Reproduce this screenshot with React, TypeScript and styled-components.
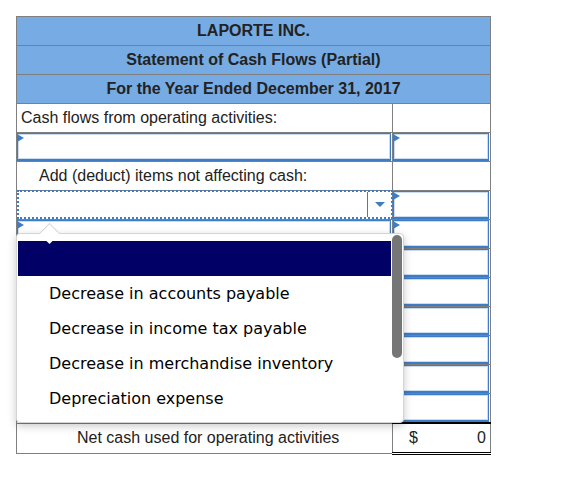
import React from 'react';
import styled, { createGlobalStyle } from 'styled-components';

const GlobalStyle = createGlobalStyle`
  body {
    margin: 0;
    background: #fff;
    font-family: "Liberation Sans", Arial, sans-serif;
  }
`;

const Page = styled.div`
  padding: 16px 0 0 16px;
`;

const Sheet = styled.table`
  border-collapse: collapse;
  table-layout: fixed;
  font-size: 16px;
  color: #222;
`;

const HeadCell = styled.td`
  height: 28px;
  padding: 0;
  border: 1px solid #7f7f7f;
  background: #76abe3;
  font-weight: bold;
  text-align: center;
`;

const Cell = styled.td<{ $indent?: number }>`
  position: relative;
  height: 28px;
  padding: 0 0 0 ${(p) => p.$indent ?? 4}px;
  border: 1px solid #7f7f7f;
  background: #fff;
  white-space: nowrap;
`;

const FieldCell = styled.td`
  position: relative;
  height: 28px;
  padding: 0;
  border: 1px solid #7f7f7f;
  background: #fff;
`;

const Field = styled.div`
  position: relative;
  height: 28px;
  box-sizing: border-box;
  margin-right: 1px;
  border: 1px solid #3f7cc6;
  border-bottom-width: 2px;
  box-shadow: inset 0 0 0 1px #c9dcf2;
  background: #fff;

  &::before {
    content: '';
    position: absolute;
    left: -1px;
    top: 0;
    border-left: 7px solid #3f7cc6;
    border-top: 4px solid transparent;
    border-bottom: 4px solid transparent;
  }
`;

const Select = styled.div`
  height: 29px;
  box-sizing: border-box;
  margin: -1px -1px 0 0;
  border: 2px dotted #3f7cc6;
  display: flex;
  justify-content: flex-end;
`;

const SelectArrow = styled.div`
  width: 23px;
  border-left: 1px solid #3f7cc6;
  display: flex;
  align-items: center;
  justify-content: center;

  &::after {
    content: '';
    border-top: 5px solid #3f7cc6;
    border-left: 5px solid transparent;
    border-right: 5px solid transparent;
  }
`;

const Menu = styled.div`
  position: absolute;
  z-index: 5;
  left: -1px;
  top: 42px;
  width: 388px;
  height: 190px;
  box-sizing: border-box;
  background: #fff;
  border: 1px solid #d4d4d4;
  border-radius: 4px;
  box-shadow: 0 3px 8px rgba(0, 0, 0, 0.22);

  &::before {
    content: '';
    position: absolute;
    left: 25px;
    top: -8px;
    width: 14px;
    height: 14px;
    background: #fff;
    border-left: 1px solid #d4d4d4;
    border-top: 1px solid #d4d4d4;
    transform: rotate(45deg);
  }
`;

const MenuList = styled.ul`
  list-style: none;
  margin: 0;
  padding: 7px 12px 0 1px;
  height: 100%;
  box-sizing: border-box;
  overflow: hidden;
  font-family: "DejaVu Sans", Verdana, sans-serif;
  font-size: 16px;
  color: #000;
`;

const ScrollThumb = styled.div`
  position: absolute;
  top: 1px;
  right: 1px;
  width: 10px;
  height: 123px;
  border-radius: 5px;
  background: #767676;
`;

const Option = styled.li<{ $active?: boolean }>`
  height: 35px;
  line-height: 35px;
  padding-left: 31px;
  white-space: nowrap;
  background: ${(p) => (p.$active ? '#000066' : 'transparent')};
`;

const TotalCell = styled.td`
  height: 28px;
  padding: 0 4px 0 16px;
  border: 1px solid #7f7f7f;
  border-top: 2px solid #000;
  border-bottom: 3px double #000;
`;

const Amount = styled.div`
  display: flex;
  justify-content: space-between;
`;

const options = [
  '',
  'Decrease in accounts payable',
  'Decrease in income tax payable',
  'Decrease in merchandise inventory',
  'Depreciation expense',
];

function InputRow() {
  return (
    <tr>
      <FieldCell>
        <Field />
      </FieldCell>
      <FieldCell>
        <Field />
      </FieldCell>
    </tr>
  );
}

export default function App() {
  return (
    <>
      <GlobalStyle />
      <Page>
        <Sheet>
          <colgroup>
            <col style={{ width: 376 }} />
            <col style={{ width: 98 }} />
          </colgroup>
          <tbody>
            <tr>
              <HeadCell colSpan={2}>LAPORTE INC.</HeadCell>
            </tr>
            <tr>
              <HeadCell colSpan={2}>Statement of Cash Flows (Partial)</HeadCell>
            </tr>
            <tr>
              <HeadCell colSpan={2}>For the Year Ended December 31, 2017</HeadCell>
            </tr>
            <tr>
              <Cell>Cash flows from operating activities:</Cell>
              <Cell />
            </tr>
            <InputRow />
            <tr>
              <Cell $indent={22}>Add (deduct) items not affecting cash:</Cell>
              <Cell />
            </tr>
            <tr>
              <FieldCell>
                <Select>
                  <SelectArrow />
                </Select>
                <Menu>
                  <MenuList>
                    {options.map((o, i) => (
                      <Option key={i} $active={i === 0}>
                        {o}
                      </Option>
                    ))}
                  </MenuList>
                  <ScrollThumb />
                </Menu>
              </FieldCell>
              <FieldCell>
                <Field />
              </FieldCell>
            </tr>
            {Array.from({ length: 7 }).map((_, i) => (
              <InputRow key={i} />
            ))}
            <tr>
              <Cell $indent={60}>Net cash used for operating activities</Cell>
              <TotalCell>
                <Amount>
                  <span>$</span>
                  <span>0</span>
                </Amount>
              </TotalCell>
            </tr>
          </tbody>
        </Sheet>
      </Page>
    </>
  );
}
